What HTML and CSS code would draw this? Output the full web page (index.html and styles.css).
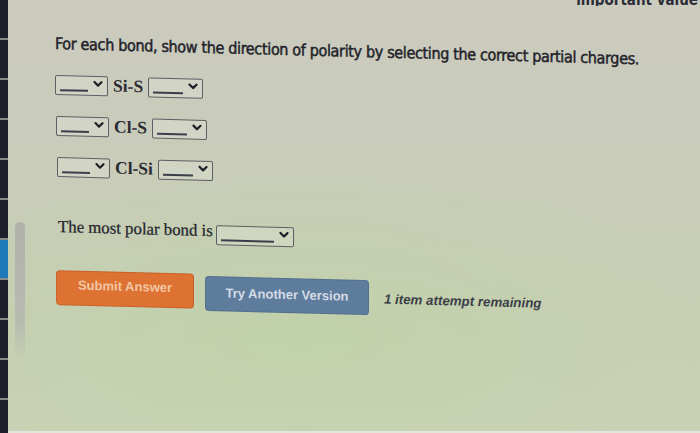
FILE: index.html
```html
<!DOCTYPE html>
<html>
<head>
<meta charset="utf-8">
<link rel="stylesheet" href="styles.css">
</head>
<body>
<div class="screen">
  <div class="sidebar">
    <div class="seg"></div><div class="seg"></div><div class="seg"></div><div class="seg"></div><div class="seg"></div><div class="seg"></div>
    <div class="seg blue"></div><div class="seg"></div><div class="seg"></div><div class="seg"></div><div class="seg"></div>
  </div>
  <div class="gutter"><div class="scroll"></div></div>
  <main class="main">
    <div class="topline">important value</div>
    <div class="content">
      <p class="heading">For each bond, show the direction of polarity by selecting the correct partial charges.</p>
      <div class="rows">
        <div class="row">
          <span class="sel"><span class="blank"></span><svg class="chev" viewBox="0 0 10 8"><path d="M1.5 2 L5 5.5 L8.5 2" /></svg></span>
          <span class="bond">Si-S</span>
          <span class="sel right"><span class="blank"></span><svg class="chev" viewBox="0 0 10 8"><path d="M1.5 2 L5 5.5 L8.5 2" /></svg></span>
        </div>
        <div class="row r2">
          <span class="sel"><span class="blank"></span><svg class="chev" viewBox="0 0 10 8"><path d="M1.5 2 L5 5.5 L8.5 2" /></svg></span>
          <span class="bond">Cl-S</span>
          <span class="sel right"><span class="blank"></span><svg class="chev" viewBox="0 0 10 8"><path d="M1.5 2 L5 5.5 L8.5 2" /></svg></span>
        </div>
        <div class="row r3">
          <span class="sel"><span class="blank"></span><svg class="chev" viewBox="0 0 10 8"><path d="M1.5 2 L5 5.5 L8.5 2" /></svg></span>
          <span class="bond">Cl-Si</span>
          <span class="sel right"><span class="blank"></span><svg class="chev" viewBox="0 0 10 8"><path d="M1.5 2 L5 5.5 L8.5 2" /></svg></span>
        </div>
      </div>
      <div class="polar">
        <span class="polar-text">The most polar bond is</span>
        <span class="sel wide"><span class="blank"></span><svg class="chev" viewBox="0 0 10 8"><path d="M1.5 2 L5 5.5 L8.5 2" /></svg></span>
      </div>
      <div class="actions">
        <button class="btn submit">Submit Answer</button>
        <button class="btn try">Try Another Version</button>
        <span class="remaining">1 item attempt remaining</span>
      </div>
    </div>
  </main>
</div>
</body>
</html>
```
FILE: styles.css
```css
html, body {
  margin: 0;
  padding: 0;
  width: 700px;
  height: 433px;
  overflow: hidden;
}
body {
  background: #c8cbb8;
}
.screen {
  display: flex;
  width: 700px;
  height: 433px;
  background:
    radial-gradient(ellipse 420px 200px at 300px 340px, rgba(185, 212, 160, 0.45), rgba(185, 212, 160, 0) 100%),
    linear-gradient(180deg, #cbcbbe 0%, #c9ccb9 40%, #c7cfb3 75%, #cad2b6 100%);
  border-bottom: 2px solid #e4e6dc;
  box-sizing: border-box;
}
.sidebar {
  width: 8px;
  flex: none;
  display: flex;
  flex-direction: column;
  gap: 2px;
  background: #8a8c88;
}
.seg {
  height: 38px;
  background: #1d1f29;
  flex: none;
}
.seg.blue {
  background: #1f78b8;
}
.gutter {
  width: 47px;
  flex: none;
  display: flex;
  flex-direction: column;
  padding-top: 222px;
  padding-left: 7px;
  box-sizing: border-box;
}
.scroll {
  width: 10px;
  height: 140px;
  border-radius: 5px;
  background: linear-gradient(180deg, #b0b2ab 0%, #b8bbb0 70%, rgba(190, 195, 180, 0) 100%);
}
.main {
  flex: 1;
  display: flex;
  flex-direction: column;
}
.topline {
  height: 6px;
  text-align: right;
  font-family: "DejaVu Sans", sans-serif;
  font-stretch: condensed;
  font-weight: bold;
  font-size: 15px;
  line-height: 0;
  color: #2c2d38;
  padding-right: 2px;
  overflow: hidden;
}
.content {
  transform: skewY(1.5deg);
  transform-origin: 0 0;
  display: flex;
  flex-direction: column;
  padding-top: 29px;
}
.heading {
  margin: 0;
  font-family: "DejaVu Sans", sans-serif;
  font-stretch: condensed;
  font-size: 16px;
  letter-spacing: -0.35px;
  color: #22222a;
  -webkit-text-stroke: 0.45px #22222a;
  white-space: nowrap;
  line-height: 18px;
}
.rows {
  display: flex;
  flex-direction: column;
  gap: 20px;
  margin-top: 21px;
}
.row {
  display: flex;
  align-items: center;
  gap: 5px;
}
.row.r2 {
  padding-left: 1px;
}
.row.r3 {
  padding-left: 2px;
}
.sel {
  width: 53px;
  height: 20px;
  box-sizing: border-box;
  border: 1px solid #5d5f63;
  border-radius: 2px;
  background: rgba(225, 228, 218, 0.35);
  display: flex;
  align-items: flex-end;
  padding: 0 4px 3px 4px;
  gap: 3px;
}
.sel.right {
  width: 55px;
}
.sel.wide {
  width: 78px;
}
.blank {
  flex: 1;
  height: 2px;
  background: #3b3e4a;
  margin-right: 2px;
}
.chev {
  width: 10px;
  height: 8px;
  margin-bottom: 4px;
  flex: none;
}
.chev path {
  fill: none;
  stroke: #1f2028;
  stroke-width: 2.2;
  stroke-linecap: round;
  stroke-linejoin: round;
}
.bond {
  font-family: "Liberation Serif", serif;
  font-weight: bold;
  font-size: 17.5px;
  color: #2a2a33;
}
.polar {
  display: flex;
  align-items: flex-end;
  gap: 3px;
  margin-top: 40px;
  padding-left: 3px;
}
.polar-text {
  font-family: "Liberation Serif", serif;
  font-size: 16.8px;
  color: #24242c;
  -webkit-text-stroke: 0.25px #24242c;
  line-height: 19px;
}
.polar .sel {
  margin-bottom: -5px;
}
.actions {
  display: flex;
  align-items: center;
  gap: 13px;
  margin-top: 33px;
  padding-left: 2px;
}
.btn {
  height: 33px;
  border: none;
  border-radius: 3px;
  font-family: "Liberation Sans", sans-serif;
  font-weight: bold;
  font-size: 13px;
  padding: 0 12px;
  box-sizing: border-box;
}
.submit {
  width: 136px;
  background: #de7232;
  box-shadow: 0 0 0 1px #c8622a;
  color: #f1c6a4;
  padding-bottom: 7px;
}
.try {
  width: 162px;
  background: #5e7c9c;
  box-shadow: 0 0 0 1px #55708e;
  color: #d3dbe6;
  margin-top: 4px;
  padding-bottom: 3px;
}
.remaining {
  font-family: "Liberation Sans", sans-serif;
  font-style: italic;
  font-weight: bold;
  font-size: 13.3px;
  color: #3c3e48;
  margin-left: 3px;
  margin-top: 6px;
}
```
